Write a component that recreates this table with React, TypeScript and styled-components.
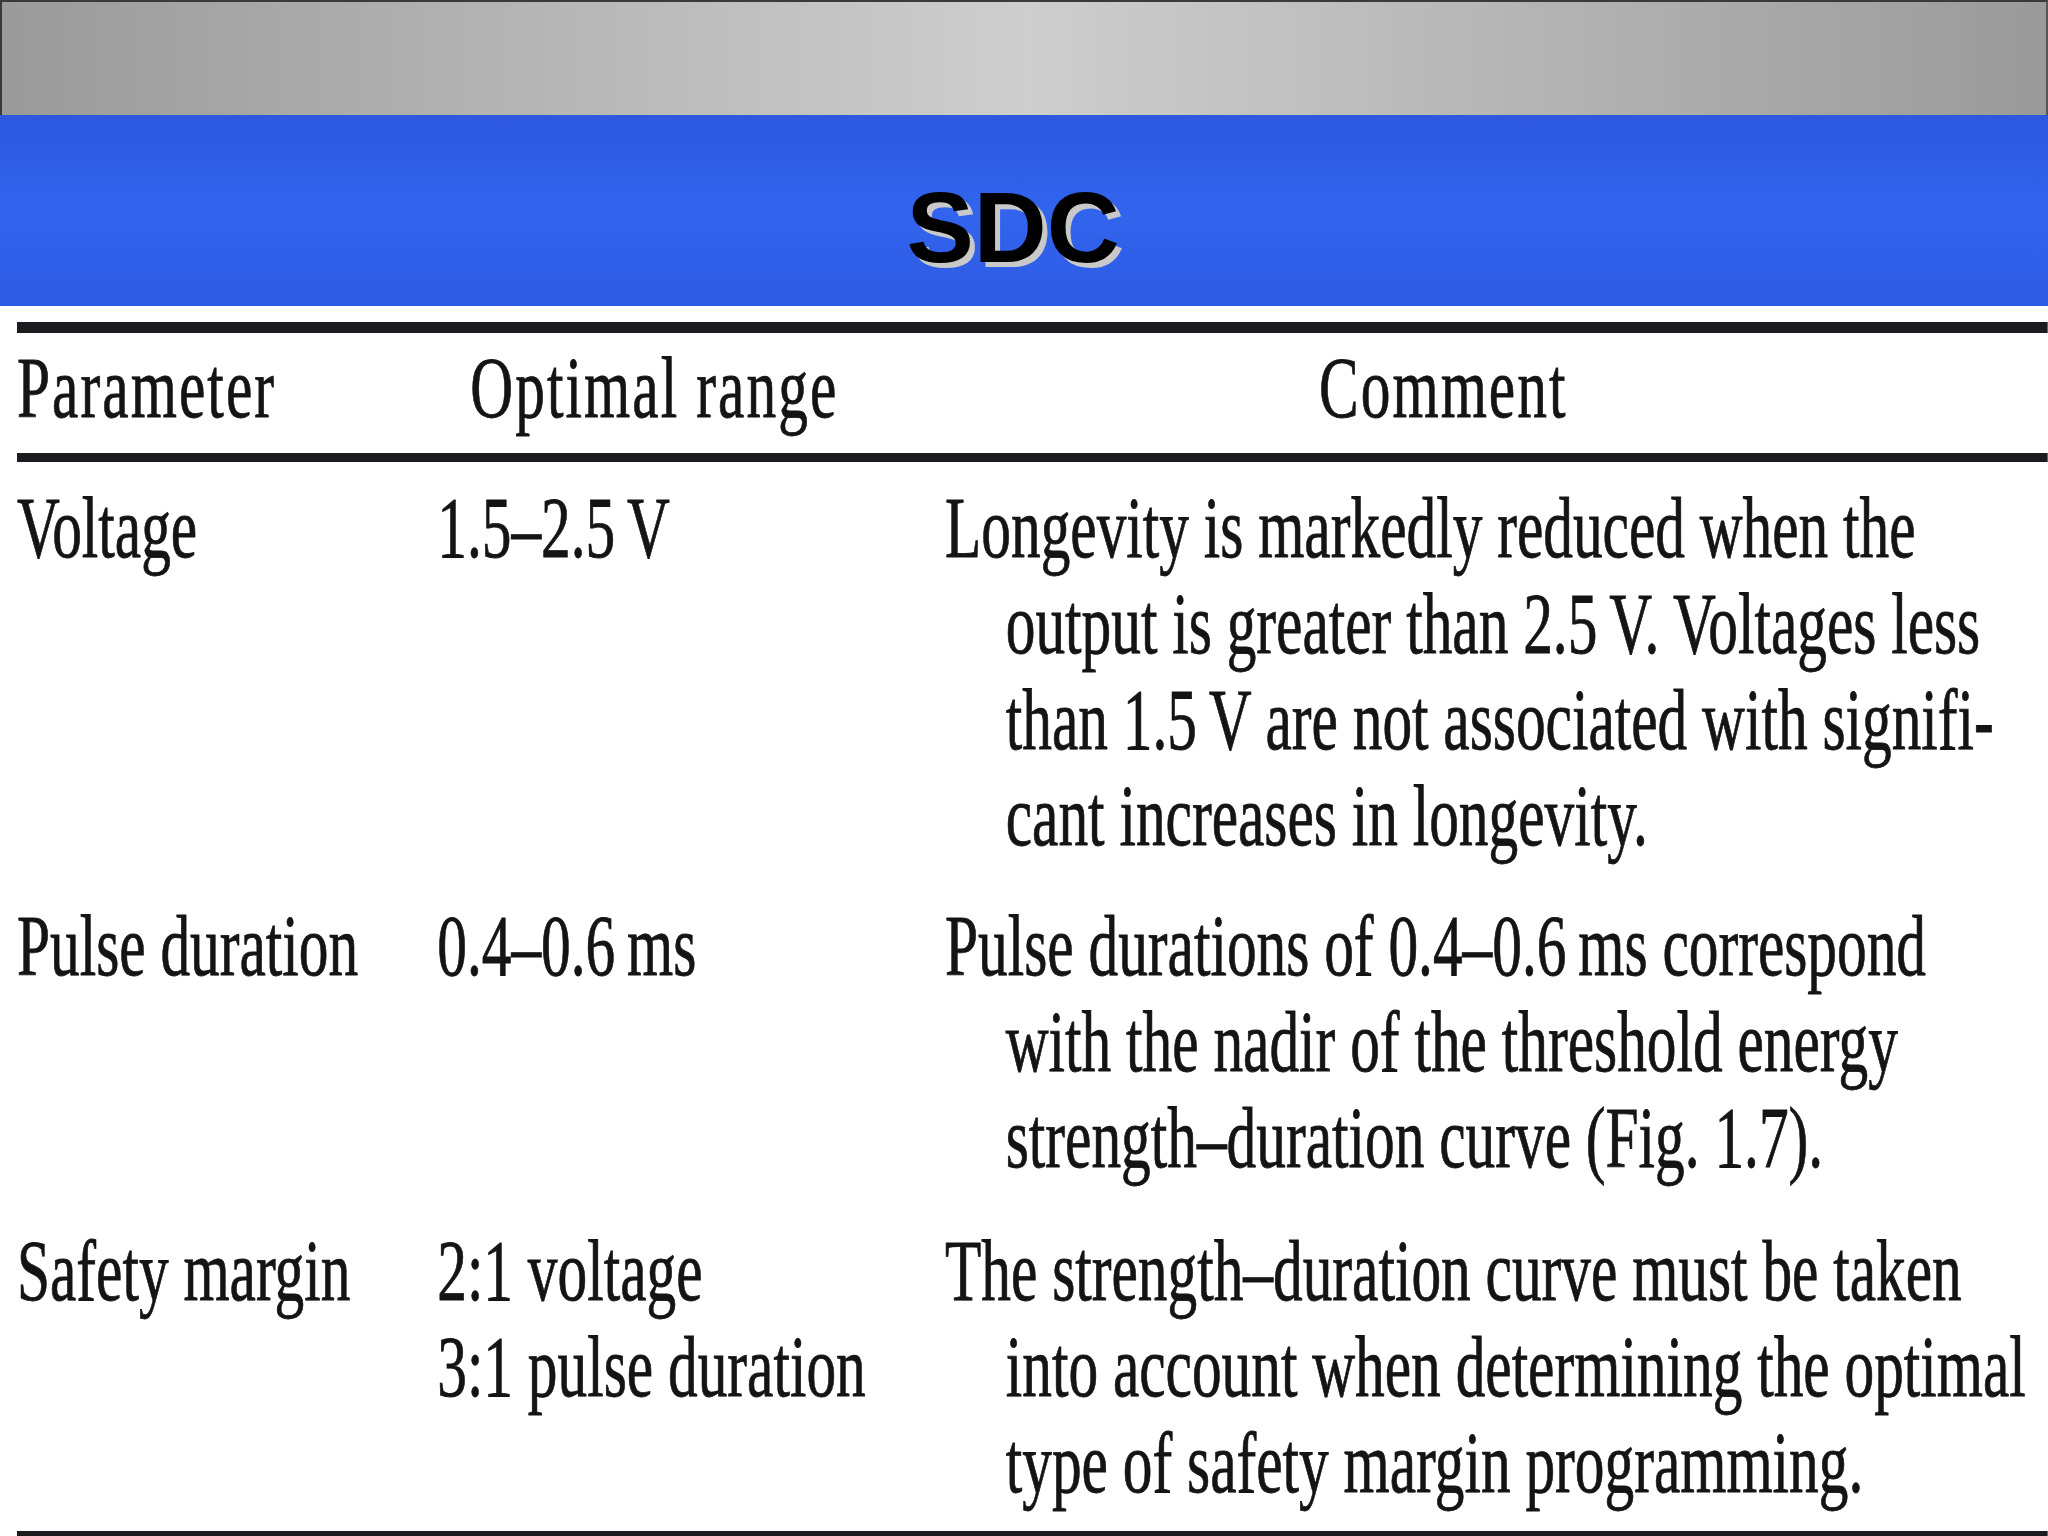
import React from 'react'
import styled, { createGlobalStyle } from 'styled-components'

const GlobalStyle = createGlobalStyle`
  html, body {
    margin: 0;
    padding: 0;
    background: #ffffff;
    overflow: hidden;
  }
`

// horizontal squeeze of the typeset table, as in the scanned figure
const SQUEEZE = 0.69

interface Row {
  parameter: string
  range: string[]
  comment: string[]
  gap: number
}

const rows: Row[] = [
  {
    parameter: 'Voltage',
    range: ['1.5–2.5\u2009V'],
    comment: [
      'Longevity is markedly reduced when the',
      'output is greater than 2.5\u2009V. Voltages less',
      'than 1.5\u2009V are not associated with signifi-',
      'cant increases in longevity.',
    ],
    gap: 18,
  },
  {
    parameter: 'Pulse duration',
    range: ['0.4–0.6\u2009ms'],
    comment: [
      'Pulse durations of 0.4–0.6\u2009ms correspond',
      'with the nadir of the threshold energy',
      'strength–duration curve (Fig. 1.7).',
    ],
    gap: 34,
  },
  {
    parameter: 'Safety margin',
    range: ['2:1 voltage', '3:1 pulse duration'],
    comment: [
      'The strength–duration curve must be taken',
      'into account when determining the optimal',
      'type of safety margin programming.',
    ],
    gap: 37,
  },
]

const Page = styled.div`
  width: 2048px;
  height: 1536px;
  overflow: hidden;
  background: #ffffff;
  display: flex;
  flex-direction: column;
`

const TopBar = styled.div`
  height: 113px;
  flex-shrink: 0;
  border-top: 2px solid #3a3a3a;
  border-left: 2px solid #3a3a3a;
  border-right: 2px solid #555555;
  background: linear-gradient(
    to right,
    #9a9a9a 0%,
    #b4b4b4 25%,
    #cecece 50%,
    #b4b4b4 75%,
    #9a9a9a 100%
  );
`

const TitleBand = styled.div`
  height: 191px;
  flex-shrink: 0;
  display: flex;
  justify-content: center;
  align-items: flex-start;
  padding: 61px 22px 0 0;
  box-sizing: border-box;
  background: linear-gradient(
    to bottom,
    #2d58df 0%,
    #3264ee 50%,
    #2e5be4 100%
  );
`

const Title = styled.h1`
  margin: 0;
  font-family: 'Liberation Sans', Arial, sans-serif;
  font-weight: 700;
  font-size: 101px;
  line-height: 103px;
  color: #000000;
  text-shadow: 5px 5px 0 #c9c9c9;
`

const TableWrap = styled.div`
  margin-top: 16px;
  margin-left: 17px;
  width: ${Math.round(2031 / SQUEEZE)}px;
  transform: scaleX(${SQUEEZE});
  transform-origin: 0 0;
  font-family: 'Liberation Serif', 'Times New Roman', serif;
  font-size: 86px;
  line-height: 96px;
  color: #141414;
  -webkit-text-stroke: 0.8px #141414;
`

const Rule = styled.div<{ $thick: number }>`
  height: ${p => p.$thick}px;
  background: #1c1b1f;
`

const Grid = styled.div`
  display: grid;
  grid-template-columns: 609px 736px 1fr;
`

const HeaderRow = styled(Grid)`
  padding: 7px 0 17px;
  letter-spacing: 3px;
`

const HeadCell = styled.div<{ $pad?: number }>`
  padding-left: ${p => p.$pad ?? 0}px;
  white-space: nowrap;
`

const BodyRow = styled(Grid)<{ $gap: number }>`
  padding-top: ${p => p.$gap}px;
`

const Cell = styled.div`
  display: flex;
  flex-direction: column;
  white-space: nowrap;
`

const Line = styled.div<{ $hang?: boolean }>`
  padding-left: ${p => (p.$hang ? 88 : 0)}px;
`

const BottomRule = styled(Rule)`
  margin-top: 20px;
`

export default function App() {
  return (
    <>
      <GlobalStyle />
      <Page>
        <TopBar />
        <TitleBand>
          <Title>SDC</Title>
        </TitleBand>
        <TableWrap>
          <Rule $thick={11} />
          <HeaderRow>
            <HeadCell>Parameter</HeadCell>
            <HeadCell $pad={48}>Optimal range</HeadCell>
            <HeadCell $pad={542}>Comment</HeadCell>
          </HeaderRow>
          <Rule $thick={9} />
          {rows.map(row => (
            <BodyRow key={row.parameter} $gap={row.gap}>
              <Cell>
                <Line>{row.parameter}</Line>
              </Cell>
              <Cell>
                {row.range.map(r => (
                  <Line key={r}>{r}</Line>
                ))}
              </Cell>
              <Cell>
                {row.comment.map((c, i) => (
                  <Line key={c} $hang={i > 0}>
                    {c}
                  </Line>
                ))}
              </Cell>
            </BodyRow>
          ))}
          <BottomRule $thick={9} />
        </TableWrap>
      </Page>
    </>
  )
}
